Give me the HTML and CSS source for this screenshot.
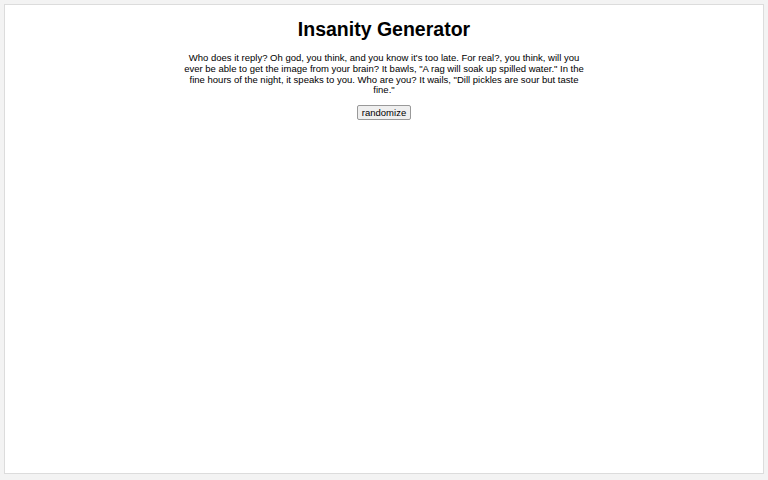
FILE: index.html
```html
<!DOCTYPE html>
<html>
<head>
<meta charset="utf-8">
<link rel="stylesheet" href="styles.css">
</head>
<body>
<div class="panel">
  <h1 class="title">Insanity Generator</h1>
  <p class="story">Who does it reply? Oh god, you think, and you know it's too late. For real?, you think, will you ever be able to get the image from your brain? It bawls, "A rag will soak up spilled water." In the fine hours of the night, it speaks to you. Who are you? It wails, "Dill pickles are sour but taste fine."</p>
  <button class="btn">randomize</button>
</div>
</body>
</html>
```
FILE: styles.css
```css
html, body { margin: 0; padding: 0; }
body {
  background: #f3f3f3;
  font-family: "Liberation Sans", Arial, sans-serif;
  padding: 4px;
  height: 480px;
  box-sizing: border-box;
}
.panel {
  background: #fff;
  border: 1px solid #dcdcdc;
  height: 470px;
  box-sizing: border-box;
  display: flex;
  flex-direction: column;
  align-items: center;
}
.title {
  font-size: 19.5px;
  font-weight: bold;
  margin: 13px 0 0;
  line-height: 22px;
  color: #000;
}
.story {
  width: 404px;
  font-size: 9.5px;
  line-height: 10.8px;
  text-align: center;
  margin: 13px 0 0;
  color: #000;
}
.btn {
  margin-top: 9px;
  font-family: "Liberation Sans", Arial, sans-serif;
  font-size: 9.5px;
  line-height: 11px;
  padding: 1px 4px;
  background: #efefef;
  border: 1px solid #999;
  border-radius: 2px;
  color: #000;
}
```
